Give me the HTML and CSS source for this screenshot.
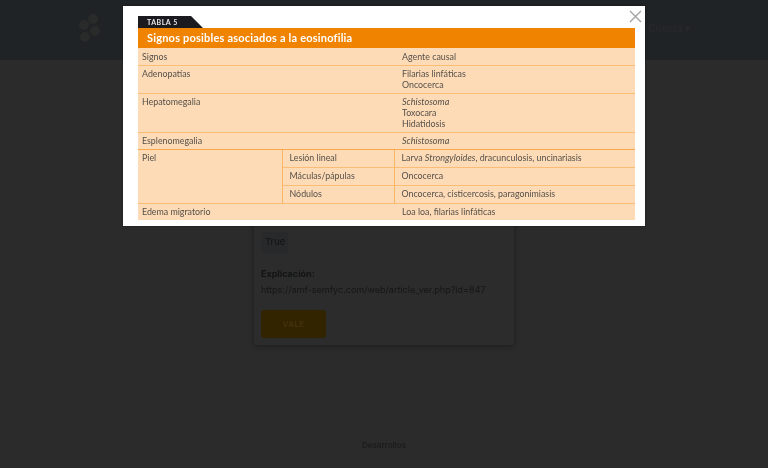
FILE: index.html
```html
<!DOCTYPE html>
<html lang="es">
<head>
<meta charset="utf-8">
<title>Tabla 5</title>
<link rel="stylesheet" href="styles.css">
</head>
<body>
<div class="page">
  <header class="topbar">
    <svg class="logo" width="24" height="30" viewBox="0 0 24 30" aria-hidden="true">
      <circle cx="15" cy="6" r="5"/><circle cx="6" cy="12" r="5"/><circle cx="17" cy="18" r="5"/><circle cx="7" cy="24" r="5"/>
    </svg>
    <span class="topbar-text">Cuenta ▾</span>
  </header>
  <main class="content">
    <section class="card">
      <span class="chip">True</span>
      <h2 class="expl-title">Explicación:</h2>
      <p class="expl-link">https://amf-semfyc.com/web/article_ver.php?id=847</p>
      <button class="ok-button" type="button">VALE</button>
    </section>
  </main>
  <footer class="footer">Desarrollos</footer>
</div>

<div class="modal">
  <svg class="close" width="13" height="13" viewBox="0 0 13 13" aria-label="Cerrar">
    <path d="M1 1 L12 12 M12 1 L1 12"/>
  </svg>
  <div class="figure">
    <div class="tab">TABLA 5</div>
    <div class="heading">Signos posibles asociados a la eosinofilia</div>
    <table class="signs">
      <colgroup><col class="c1"><col class="c2"><col class="c3"></colgroup>
      <tr class="r17"><td colspan="2">Signos</td><td>Agente causal</td></tr>
      <tr class="r28"><td colspan="2">Adenopatías</td><td>Filarias linfáticas<br>Oncocerca</td></tr>
      <tr class="r39"><td colspan="2">Hepatomegalia</td><td><i>Schistosoma</i><br>Toxocara<br>Hidatidosis</td></tr>
      <tr class="r17 strong"><td colspan="2">Esplenomegalia</td><td><i>Schistosoma</i></td></tr>
      <tr class="r18"><td rowspan="3">Piel</td><td class="sub">Lesión lineal</td><td class="sub">Larva <i>Strongyloides</i>, dracunculosis, uncinariasis</td></tr>
      <tr class="r18"><td class="sub">Máculas/pápulas</td><td class="sub">Oncocerca</td></tr>
      <tr class="r18"><td class="sub">Nódulos</td><td class="sub">Oncocerca, cisticercosis, paragonimiasis</td></tr>
      <tr class="r17"><td colspan="2">Edema migratorio</td><td>Loa loa, filarias linfáticas</td></tr>
    </table>
  </div>
</div>
</body>
</html>
```
FILE: styles.css
```css
* { box-sizing: border-box; }
html, body { margin: 0; height: 100%; }
body {
  background: #2b2b2b;
  font-family: Inter, "Liberation Sans", sans-serif;
  overflow: hidden;
}
.page {
  height: 468px;
  display: flex;
  flex-direction: column;
}
.topbar {
  height: 60px;
  flex: none;
  background: #202325;
  display: flex;
  align-items: center;
  justify-content: space-between;
  padding: 0 78px 4px 78px;
}
.logo { fill: #292a2a; }
.topbar-text { font-size: 10px; color: #27292b; }
.content {
  flex: 1;
  display: flex;
  flex-direction: column;
  align-items: center;
  justify-content: flex-end;
}
.card {
  width: 260px;
  height: 155px;
  margin-bottom: 123px;
  padding: 42px 7px 0;
  background: #2c2c2c;
  border-radius: 3px;
  box-shadow: 0 1px 5px rgba(0, 0, 0, 0.35);
  display: flex;
  flex-direction: column;
  align-items: flex-start;
  color: #121314;
  filter: blur(0.3px);
}
.chip {
  width: 27px;
  height: 21px;
  padding: 0 4px;
  line-height: 20px;
  font-size: 9.5px;
  background: #27292a;
  border-radius: 4px;
}
.expl-title {
  margin: 14px 0 0;
  font-size: 9px;
  line-height: 14px;
  font-weight: 700;
}
.expl-link {
  margin: 2px 0 0;
  font-size: 9.05px;
  line-height: 14px;
  white-space: nowrap;
  color: #151617;
}
.ok-button {
  margin-top: 13px;
  width: 65px;
  height: 28px;
  border: 0;
  border-radius: 3px;
  background: #332400;
  color: #43320c;
  font: 700 8px Inter, sans-serif;
  letter-spacing: 0.3px;
}
.footer {
  position: absolute;
  left: 0;
  right: 0;
  top: 439px;
  text-align: center;
  font-size: 8px;
  line-height: 13px;
  font-weight: 600;
  color: #1b1c1d;
  filter: blur(0.5px);
}
.modal {
  position: absolute;
  left: 123px;
  top: 6px;
  width: 522px;
  height: 220px;
  background: #fff;
  padding: 10px 10px 6px 15px;
  box-shadow: 0 0 2px rgba(0, 0, 0, 0.5);
}
.close {
  position: absolute;
  top: 4px;
  right: 3px;
  stroke: #a3a3a3;
  stroke-width: 1.4;
  fill: none;
}
.figure {
  width: 497px;
  font-family: Lato, "Liberation Sans", sans-serif;
  filter: blur(0.4px);
}
.tab {
  width: 65px;
  height: 12px;
  background: #1b1b1f;
  color: #e9e9e9;
  font-size: 7px;
  font-weight: 700;
  letter-spacing: 0.5px;
  line-height: 13px;
  padding-left: 9px;
  clip-path: polygon(0 0, 53px 0, 100% 100%, 0 100%);
}
.heading {
  height: 20px;
  background: #f08300;
  color: #fff;
  font-size: 11px;
  font-weight: 700;
  letter-spacing: 0.2px;
  line-height: 20px;
  padding-left: 9px;
}
.signs {
  width: 497px;
  table-layout: fixed;
  border-collapse: collapse;
  background: #fddbb6;
  color: #55504a;
  font-size: 8.85px;
  line-height: 11px;
}
.signs i { font-size: 9.1px; }
.c1 { width: 144px; }
.c2 { width: 112px; }
.signs td {
  padding: 2px 0 0 4px;
  vertical-align: top;
  border-top: 1px solid #fbbd76;
}
.signs tr:first-child td { border-top: 0; padding-top: 3px; }
.signs td:last-child { padding-left: 8px; }
.signs td.sub { padding-left: 7px; border-left: 1px solid #fbb566; }
.signs td.sub:last-child { padding-left: 7px; }
.signs tr.strong + tr td { border-top-color: #f9a94d; }
.r17 { height: 17px; }
.r18 { height: 18px; }
.r28 { height: 28px; }
.r39 { height: 39px; }
```
